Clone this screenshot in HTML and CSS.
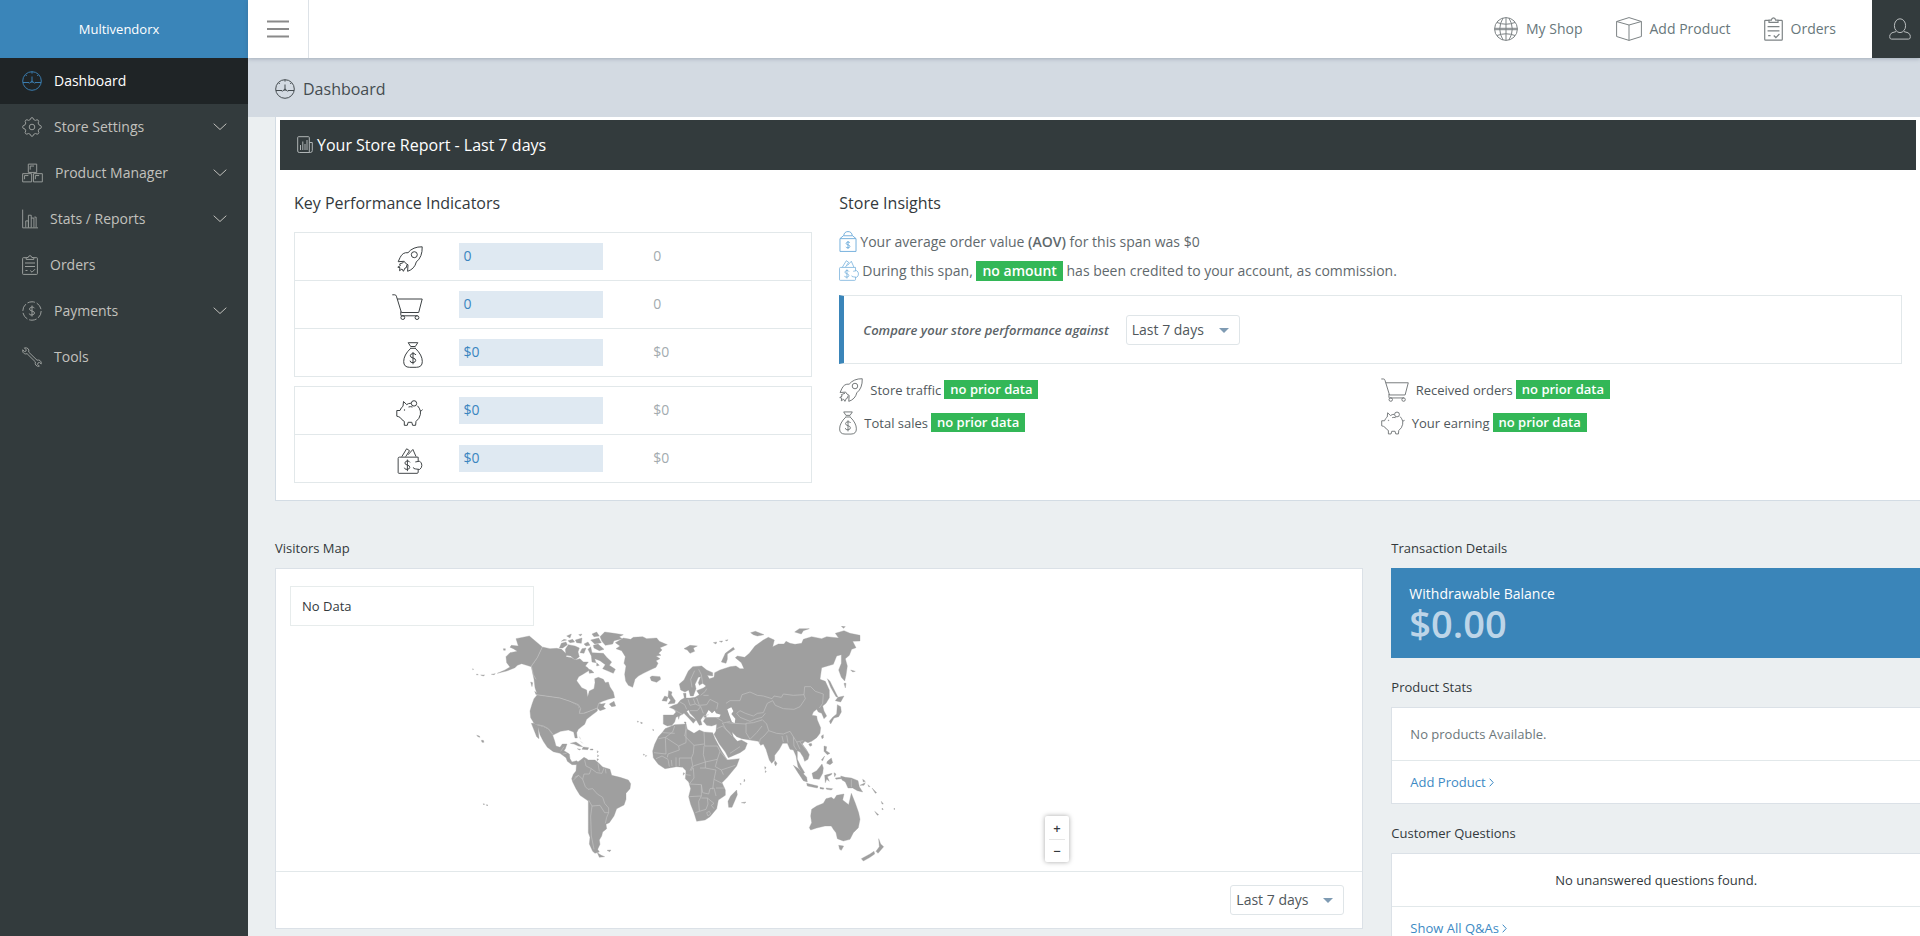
FILE: index.html
```html
<!DOCTYPE html>
<html lang="en">
<head>
<meta charset="utf-8">
<title>Multivendorx - Dashboard</title>
<meta name="viewport" content="width=device-width, initial-scale=1">
<link rel="stylesheet" href="styles.css">
</head>
<body>
<svg class="sprite" aria-hidden="true">
  <symbol id="i-dash" viewBox="0 0 20 20"><circle cx="10" cy="10" r="9.3"/><path d="M.8 11.5h6.4M12.8 11.5h6.4M10 5.5v4.2M8.6 11.6l1.4-2 1.4 2M7.2 12.6a3.2 3.2 0 0 1 5.6 0M10 .8v1.8M3.6 3.8l1.2 1.2M16.4 3.8l-1.2 1.2"/></symbol>
  <symbol id="i-gear" viewBox="0 0 20 20"><circle cx="10" cy="10" r="2.8"/><path d="M8.3 2.6Q8.6.6 10 .6t1.7 2l1.8.8q1.6-1.2 2.7-.2t-.1 2.800l.9 1.900q2.400.4 2.400 2.100t-2.400 2l-.8 1.900q1.300 1.700.2 2.800t-2.800-.2l-1.900.8q-.3 2-1.700 2t-1.700-2l-1.900-.8q-1.700 1.300-2.800.2t.2-2.800L3 12q-2.400-.3-2.400-2t2.400-2.100L3.800 6Q2.600 4.300 3.700 3.200t2.800.2z"/></symbol>
  <symbol id="i-boxes" viewBox="0 0 22 20"><path d="M6.600.7h8.800v8.700H6.600zM.7 10.700h9.400v8.600H.7zM12 10.700h9.300v8.600H12zM8.600 6.500V2.700h4M2.700 16.500v-3.800h4M14 16.500v-3.800h4"/></symbol>
  <symbol id="i-bars" viewBox="0 0 17 20"><path d="M.7 0v19.400H17M4 19v-7h2.800v7M6.800 19V6h3v13M9.800 9h2.900v10M13 8h2v11"/></symbol>
  <symbol id="i-clip" viewBox="0 0 16 20"><path d="M4 2.700H1.300q-.7 0-.7.700v15.200q0 .8.700.8h13.400q.7 0 .7-.8V3.400q0-.7-.7-.7H12M4.200 4.400V2.500h2q.3-1.800 1.800-1.800t1.800 1.800h2v1.900zM3 8h10M3 11.500h10M3.500 15.500h2M8.200 15.500l1.800 1.700 3-3"/></symbol>
  <symbol id="i-pay" viewBox="0 0 20 20"><circle cx="10" cy="10" r="9.200" stroke-dasharray="7.600 2"/><path d="M12.600 7.300Q12 6 10 6T7.500 8q0 1.500 2.500 2t2.500 2-2.500 2-2.700-1.500M10 4.500v11"/></symbol>
  <symbol id="i-wrench" viewBox="0 0 20 20"><path d="M.7 2.800q-.4 2.900 1.700 3.900 1.200.5 2.700 0l8.300 8.200q-.6 2 .5 3.300 1.700 1.700 3.500 1l-1.800-1.800.4-1.500 1.600-.4 1.600 1.500q.4-2.400-1.200-3.500-1.300-.8-3-.3L6.700 5.100q.7-2.400-.7-3.500T2.400.9l1.900 2-.4 1.300-1.400.4z"/></symbol>
  <symbol id="i-down" viewBox="0 0 14 8"><path d="M.7.700 7 6.500 13.300.7"/></symbol>
  <symbol id="i-next" viewBox="0 0 5 9"><path d="M.7.700 4.200 4.500.7 8.300"/></symbol>
  <symbol id="i-menu" viewBox="0 0 22 18"><path d="M0 1.500h22M0 9h22M0 16.500h22"/></symbol>
  <symbol id="i-globe" viewBox="0 0 24 24"><circle cx="12" cy="12" r="11.400"/><path d="M.6 11.300h22.800M.6 12.700h22.800M12 .6v22.800M3 5.500q9 3.400 18 0M3 18.500q9-3.400 18 0M9 1q-6.500 11 0 22M15 1q6.500 11 0 22"/></symbol>
  <symbol id="i-cube" viewBox="0 0 26 24"><path d="M.6 4.500 13 .6l12.400 3.900v15L13 23.400.6 19.500zL13 8l12.400-3.500M13 8v15.400"/></symbol>
  <symbol id="i-user" viewBox="0 0 22 22"><ellipse cx="11" cy="7.700" rx="5.600" ry="6.900"/><path d="M7 13.600q-5 .8-6 3-1 4.500 1.500 4.500h17q2.500 0 1.500-4.500-1-2.200-6-3"/></symbol>
  <symbol id="i-report" viewBox="0 0 16 18"><path d="M1.500.7h10q.8 0 .8.800v15h-10Q.7 16.500.7 15V1.500q0-.8.800-.8zM12.500 6.500h2.800v8q0 2-2 2h-1M3.500 14V9M5.800 14V5.500M8 14V8M10 14V4"/></symbol>
  <symbol id="i-rocket" viewBox="0 0 26 26"><path d="M25.200.8Q16 .6 11 6.700q-5.500-.7-8 5l-1.800 4 6-.4Q8.500 18 11 18.800L10.600 25.300q7-2.300 8.700-9.300Q25.500 11 25.200.8zM6.500 16.500 2.600 18l.8 1.600-2.600 1.600 2.200.5-.5 3L5 23l1.400 2.300L8 22l1.300-.3.600-2.700"/><circle cx="17.300" cy="8.700" r="3"/></symbol>
  <symbol id="i-cart" viewBox="0 0 31 26"><path d="M.3.800h2.400q1.300 0 1.700 1.400l5 16.300h17.300L30.200 5H5.300M8.800 17.500v4M9 21.800h16.500"/><circle cx="10.800" cy="23.600" r="1.900"/><circle cx="25" cy="23.600" r="1.900"/></symbol>
  <symbol id="i-bag" viewBox="0 0 20 26"><path d="M5.200.7h9.600L12.300 4.500H7.700zM7 6.300h6M7.500 6.500Q.7 13 .7 19.500q0 5.800 6 5.800h6.600q6 0 6-5.800 0-6.500-6.800-13M13 13Q12.500 11.600 10 11.600T7.300 13.700q0 1.700 2.700 2.300t2.700 2.400-2.700 2.200T7 18.700M10 10v12.300"/></symbol>
  <symbol id="i-pig" viewBox="0 0 27 26"><path d="M15 3.200q-2.800.1-4.300 1.400L7.500 1.500 7 6.300Q4.800 7.800 4 10.500H.8v5.700q2.200.4 3.500 1.400 1.500 2.500 4 3.800v3.900h3l.8-3h3.700l.8 3h3l.4-3.900q3.600-2.600 4.400-7V11q1.300 0 2.200-1.500M24.400 11q-.8-3-2.900-5.200M12.500 7q2-.7 4 0"/><circle cx="18" cy="3.400" r="2.700"/><circle cx="8.500" cy="10" r=".3"/></symbol>
  <symbol id="i-wallet" viewBox="0 0 26 27"><path d="M21.500 14V9.500H2q-1.300 0-1.300 1.300v14.700q0 .8.900.8h18.700q1.200 0 1.200-1.200V22M4.500 9 9.500.8l3 2L8.500 9M11 7l5-5.500L19.300 9M18.500 14.500l4.500-.8q2.300 1.500 2.300 4.300T23 22.300l-4.500-.6q-2 0-2-1.600M13 15q-.7-1.600-2.700-1.600T7.700 15.500q0 1.700 2.500 2.200t2.600 2.300-2.600 2.200-3-1.700M10.300 12v12"/></symbol>
  <symbol id="i-purse" viewBox="0 0 18 22"><path d="M.6 8h16.800v13.400H.6zM.6 8l3.600-3h9.600l3.600 3M4.500 5Q5 .6 9 .6T13.500 5M11 12.400Q10.500 11.500 9 11.500t-2 1.400q0 1.200 2 1.600t2 1.700-2 1.400-2.200-1M9 10.500v8.300"/></symbol>
</svg>

<div class="app">
  <aside class="sidebar">
    <a class="brand" href="#">Multivendorx</a>
    <nav class="side-nav" aria-label="Main">
      <a class="side-link active" href="#"><svg class="icon w20"><use href="#i-dash"/></svg><span>Dashboard</span></a>
      <a class="side-link" href="#"><svg class="icon w20"><use href="#i-gear"/></svg><span>Store Settings</span><svg class="chev"><use href="#i-down"/></svg></a>
      <a class="side-link" href="#"><svg class="icon w21"><use href="#i-boxes"/></svg><span>Product Manager</span><svg class="chev"><use href="#i-down"/></svg></a>
      <a class="side-link" href="#"><svg class="icon w16"><use href="#i-bars"/></svg><span>Stats / Reports</span><svg class="chev"><use href="#i-down"/></svg></a>
      <a class="side-link" href="#"><svg class="icon w16"><use href="#i-clip"/></svg><span>Orders</span></a>
      <a class="side-link" href="#"><svg class="icon w20"><use href="#i-pay"/></svg><span>Payments</span><svg class="chev"><use href="#i-down"/></svg></a>
      <a class="side-link" href="#"><svg class="icon w20"><use href="#i-wrench"/></svg><span>Tools</span></a>
    </nav>
  </aside>

  <div class="page">
    <header class="topbar">
      <button class="menu-btn" type="button" aria-label="Toggle menu"><svg><use href="#i-menu"/></svg></button>
      <nav class="top-nav" aria-label="Shortcuts">
        <a href="#"><svg class="globe"><use href="#i-globe"/></svg>My Shop</a>
        <a href="#"><svg class="cube"><use href="#i-cube"/></svg>Add Product</a>
        <a href="#"><svg class="clip"><use href="#i-clip"/></svg>Orders</a>
      </nav>
      <button class="user-btn" type="button" aria-label="Account"><svg><use href="#i-user"/></svg></button>
    </header>

    <div class="title-bar"><svg><use href="#i-dash"/></svg><h1>Dashboard</h1></div>

    <main class="content">
      <section class="report">
        <h2 class="report-head"><svg><use href="#i-report"/></svg>Your Store Report - Last 7 days</h2>
        <div class="report-body">
          <div class="kpi">
            <h3>Key Performance Indicators</h3>
            <table class="kpi-table">
              <tr><th scope="row" aria-label="Traffic"><svg class="k-rocket"><use href="#i-rocket"/></svg></th><td class="now"><span>0</span></td><td class="before">0</td></tr>
              <tr><th scope="row" aria-label="Orders"><svg class="k-cart"><use href="#i-cart"/></svg></th><td class="now"><span>0</span></td><td class="before">0</td></tr>
              <tr><th scope="row" aria-label="Sales"><svg class="k-bag"><use href="#i-bag"/></svg></th><td class="now"><span>$0</span></td><td class="before">$0</td></tr>
            </table>
            <table class="kpi-table">
              <tr><th scope="row" aria-label="Earning"><svg class="k-pig"><use href="#i-pig"/></svg></th><td class="now"><span>$0</span></td><td class="before">$0</td></tr>
              <tr><th scope="row" aria-label="Commission"><svg class="k-rocket"><use href="#i-wallet"/></svg></th><td class="now"><span>$0</span></td><td class="before">$0</td></tr>
            </table>
          </div>
          <div class="insights">
            <h3>Store Insights</h3>
            <p class="insight"><svg class="purse"><use href="#i-purse"/></svg><span>Your average order value <b>(AOV)</b> for this span was $0</span></p>
            <p class="insight"><svg class="wallet"><use href="#i-wallet"/></svg><span>During this span, <mark>no amount</mark> has been credited to your account, as commission.</span></p>
            <div class="compare">
              <label for="compare">Compare your store performance against</label>
              <span class="select"><select id="compare"><option>Last 7 days</option></select></span>
            </div>
            <div class="metrics">
              <div class="metric"><svg class="m-rocket"><use href="#i-rocket"/></svg>Store traffic <mark>no prior data</mark></div>
              <div class="metric"><svg class="m-cart"><use href="#i-cart"/></svg>Received orders <mark>no prior data</mark></div>
              <div class="metric"><svg class="m-bag"><use href="#i-bag"/></svg>Total sales <mark>no prior data</mark></div>
              <div class="metric"><svg class="m-rocket"><use href="#i-pig"/></svg>Your earning <mark>no prior data</mark></div>
            </div>
          </div>
        </div>
      </section>

      <div class="columns">
        <section>
          <h2 class="block-title">Visitors Map</h2>
          <div class="card">
            <div class="map-area">
              <div class="no-data">No Data</div>
              <div class="map-canvas">
                <svg class="map" viewBox="0 30 1380 720" role="img" aria-label="World map">
                  <g class="land">
                    <path d="M168 68 208 60 247 93 232 125 214 152 200 148 185 143 172 148 165 155 140 165 112 172 135 162 150 153 140 140 138 122 150 110 172 106 160 98 150 94 154 88 175 90z"/>
                    <path d="M247 93 270 98 290 97 305 100 320 115 318 122 335 125 345 132 360 128 370 138 385 138 376 150 384 156 388 163 370 174 356 182 350 194 365 215 380 222 383 243 388 225 402 218 405 200 404 188 415 184 430 190 436 200 445 198 450 213 460 228 464 245 445 250 428 256 415 262 425 264 436 262 430 272 437 278 420 284 412 276 390 285 370 293 360 290 355 270 330 256 300 246 232 236 225 215 222 190 214 152 232 125z"/>
                    <path d="M448 264 462 256 467 270 455 272z"/>
                    <path d="M232 236 300 246 330 256 355 270 360 290 375 292 390 285 412 277 412 285 395 298 380 310 374 325 355 340 350 350 352 366 345 366 341 348 325 342 302 346 285 354 278 358 265 340 250 332 232 328 222 322 212 305 210 285 216 265 222 248z"/>
                    <path d="M222 322 232 328 250 332 265 340 278 358 284 375 288 390 300 394 307 384 321 384 316 398 312 404 328 414 330 428 336 438 350 434 356 440 348 446 336 446 322 436 318 425 300 412 280 407 262 394 250 376 240 356 234 334 237 368 230 362 222 342 214 322z"/>
                    <path d="M331 382 348 378 368 392 355 390 342 384zM370 393 386 395 383 401 366 400zM391 399l8 0 0 3-8 0zM352 398l10 2-4 2zM358 362l4 8M362 376l6 6"/>
                    <path d="M350 440 362 432 372 424 380 428 385 432 405 432 415 440 428 453 450 460 455 478 480 484 505 492 512 503 510 518 498 532 498 550 492 567 470 578 462 600 448 620 438 625 440 638 428 648 425 660 418 672 420 685 413 700 418 708 405 712 398 706 388 684 390 664 385 650 385 555 360 538 348 518 338 498 335 488 340 475 348 465z"/>
                    <path d="M412 710 424 718 434 722 418 724zM441 703l12-1-4 5z"/>
                    <path d="M466 80 490 66 512 70 520 64 548 62 560 68 590 66 598 76 622 86 600 95 606 102 596 112 603 118 588 120 600 128 588 134 594 142 588 154 570 162 550 172 535 180 525 190 518 214 505 208 497 195 494 175 498 150 492 142 496 122 485 104 468 98 480 90z"/>
                    <path d="M570 184 576 180 600 182 602 190 590 199 574 194z"/>
                    <path d="M316 100 325 86 345 90 358 96 354 108 358 122 345 132 332 120 318 118zM298 96 304 82 318 78 322 86 308 96zM360 110 366 98 378 96 372 112zM384 100 392 92 396 110 430 112 440 124 455 138 448 148 466 160 460 172 446 166 428 158 436 146 420 134 404 128 408 140 396 138 394 120zM386 160 394 162 402 170 388 172zM410 140 418 148 410 150z"/>
                    <path d="M400 88 414 84 432 100 418 104 402 96zM420 62 434 48 462 52 490 56 478 62 486 68 462 74 458 84 436 88 426 76zM392 72 416 66 424 80 404 84zM346 72 366 66 364 82 350 80zM320 60 334 54 330 66zM356 56 366 54 362 60zM372 84 384 78 390 88 378 90zM396 54 410 48 418 60 402 62zM324 74 338 70 344 78 330 80zM304 76 312 70 320 72z"/>
                    <path d="M50 358l8 2 2 4-6-2zM64 373l6 0 2 6-6 0zM94 175l12-2-4 3zM50 174l5 2-5 1zM62 177l12 0-4 3zM38 158l3 2-3 1zM130 98l6 0 0 5-5 0zM212 198l6 2-2 12zM224 226l10 8-6 2zM70 563l4 1-3 3zM79 566l5 1-3 3zM532 315l4 2-3 2zM542 318l6 3-5 2zM550 414l4 2-3 2zM557 418l3 1-3 3zM578 340l4 2-3 2z"/>
                    <path d="M412 404l3 3-3 4zM413 416l3 3-3 4zM411 428l5 2-4 4z"/>
                  </g>
                  <g class="land" transform="translate(540 0)">
                    <path d="M70 297 100 297 108 288 102 280 88 274 100 268 112 264 122 252 133 246 130 232 138 232 138 246 150 246 165 244 178 236 170 224 190 216 198 210 188 202 178 208 175 200 182 182 175 184 165 205 168 218 160 240 151 240 146 222 135 228 122 222 118 204 132 192 145 165 158 152 185 150 200 162 218 170 218 180 202 178 208 188 222 184 224 170 240 162 270 152 288 150 300 158 312 158 304 140 286 125 292 120 314 124 328 112 345 90 370 72 385 64 403 72 398 92 415 84 432 84 438 76 450 82 465 85 485 82 490 70 515 62 545 68 560 62 596 66 586 52 612 44 630 52 660 58 660 75 638 76 648 95 635 100 628 118 616 128 622 150 618 178 614 195 604 184 596 162 604 142 604 116 590 120 580 145 545 155 540 190 556 196 568 222 568 245 558 262 548 270 552 285 560 300 552 308 545 292 535 288 530 280 520 288 516 298 530 300 532 312 542 335 540 352 530 365 515 376 504 380 495 376 487 384 500 402 508 416 504 430 494 436 490 424 480 408 472 404 472 430 482 450 494 470 488 474 474 452 468 420 460 402 450 400 442 382 428 382 418 400 404 418 404 432 395 442 388 432 378 400 370 384 362 388 355 376 330 372 306 368 290 362 276 348 280 362 292 376 304 372 322 382 315 400 300 410 265 425 256 408 238 384 222 355 228 345 230 325 215 330 200 328 190 316 196 306 190 300 182 312 186 326 178 328 170 314 162 304 150 292 146 282 140 286 150 300 168 312 160 322 148 308 132 292 122 298 108 304 104 318 96 328 82 330 70 324z"/>
                    <path d="M75 338 104 326 138 324 142 340 162 352 178 342 192 348 218 350 225 368 245 405 262 432 298 428 290 450 262 484 246 500 256 522 256 538 235 552 230 578 210 602 195 612 170 616 162 590 152 565 146 542 152 518 146 498 136 488 138 464 128 454 110 452 75 458 55 445 40 425 38 405 44 385 55 362 68 348z"/>
                    <path d="M264 556 272 540 290 522 292 536 276 574 266 574zM405 434l6 8-4 8-4-8zM86 224 96 228 94 236 106 254 104 262 84 264 92 252 84 244zM66 254 74 240 84 244 80 256z"/>
                    <path d="M244 138 256 112 280 94 284 100 262 114 262 130 258 142zM132 98 150 88 172 90 160 96 164 106 150 112 142 102zM220 80l10-2-2 6zM238 76l10-1-3 4zM256 73l8-2-3 4zM332 50 346 46 372 56 352 60 340 56zM464 48 478 38 508 38 490 44 484 54zM604 30l12 2-6 5zM632 162l14 4-8 2z"/>
                    <path d="M562 188 570 196 578 212 594 244 588 242 572 214zM612 202l6 0-2 14zM586 254 594 244 612 240 602 258zM592 266 602 272 604 288 596 302 582 306 572 324 568 316 578 304 590 294zM544 360l6-4 0 10-4 2zM506 384l8-2 2 6-6 3zM552 390 560 392 558 404 570 412 562 416 552 406zM562 436 574 426 578 440 570 446 560 442zM544 432l10-12-6 14z"/>
                    <path d="M460 448 476 458 500 484 502 498 490 494 474 470zM500 502 534 510 532 516 502 510zM540 514l12 2-2 4-10-2zM558 516l20 2-4 4-14-2zM516 472 530 464 546 444 550 456 548 472 538 490 520 488zM554 478 576 472 574 476 562 482 568 496 560 490 556 500zM582 470l6 4-4 8zM586 486l18-2 0 4-16 2zM602 480 616 484 634 486 654 494 658 512 668 528 652 524 638 516 624 516 616 498 606 492zM668 490l8 6-6 2zM660 508l16-8-4 8zM684 506l6 6-4 0zM696 516l14 14-4 2zM704 586l12 10-4 2zM724 556l6 8-4 0zM726 576l4 4-4 1zM762 576l3 3-3 2zM374 452l4 2-3 6zM376 464l3 2-3 4zM304 560l14-2-4 4zM312 490l3 2-3 6zM300 502l4 2-2 2zM130 470l4 2-4 6zM114 296l5 2-3 12zM132 318l6 0 0 8z"/>
                    <path d="M515 580 530 570 550 562 558 548 574 544 582 550 590 538 612 534 608 552 626 566 634 532 646 562 656 590 660 610 655 635 640 650 630 670 610 675 592 668 588 650 580 640 574 630 555 630 530 636 512 642 508 635 515 620 512 600z"/>
                    <path d="M596 688 611 690 604 703 599 700zM716 668 722 684 731 692 714 712 708 706 718 692zM702 706 704 714 690 724 670 735 664 728 690 714z"/>
                  </g>
                  <g class="sea" transform="translate(540 0)">
                    <path d="M198 296 206 282 216 292 224 284 228 292 242 296 238 304 216 304 200 304zM262 280 274 274 280 286 274 294 286 308 284 322 276 318 268 298z"/>
                  </g>
                  <g class="borders">
                    <path d="M247 93 232 125 214 150 220 176 228 190M228 236 300 246 330 256 355 266 362 278 358 292 370 292 390 285 412 276 416 262M232 326 250 330 265 338 280 356M302 406 312 392M320 412 308 414M374 432 378 450 394 458 388 474 372 474 368 490 356 478 344 484M394 458 410 470 426 472 432 456M414 442 418 466M436 458 438 472M356 478 340 492M368 490 376 512 384 520 398 518 412 534 428 544 434 562 446 576 446 590 434 590 420 568 396 570 386 552M396 570 392 600 394 660 402 700M446 590 440 604 436 622"/>
                  </g>
                  <g class="borders" transform="translate(540 0)">
                    <path d="M258 262 270 254 300 254 306 236 330 228 352 238 370 240 396 248 402 240 424 244 430 234 460 238 492 236 496 248 480 272 462 280 430 278 406 268 398 254 382 262 370 290 352 292 340 300 316 292 300 284 290 292 300 304 330 316 350 308 366 304 376 292M494 212 512 212 526 226 550 234 548 262 538 276M494 212 492 236"/>
                    <path d="M366 310 380 324 386 344 410 352 430 354 450 346 460 362 470 378 490 374M386 344 372 360 360 370 358 384M318 322 318 350 330 370M318 322 340 320 366 312M330 370 350 350 366 330M426 360 430 378M440 358 444 380M460 362 462 390 470 402M470 378 480 400M480 378 500 404M248 322 258 340 272 352M230 338 248 330 276 360M270 412 300 392M246 322 270 316M262 320 282 322 318 324"/>
                    <path d="M182 238 196 226 200 218M170 246 178 268 200 266 210 250 234 262 230 280M120 258 134 266 140 280M144 250 150 268 166 264 182 272 172 284 150 284M182 272 190 292M166 264 160 248M104 282 128 296M156 214 152 190 164 164M188 202 184 176 176 160M190 238 206 238M190 300 206 296M206 304 190 306M228 304 248 316"/>
                    <path d="M68 350 104 352M104 330 98 348 76 364 56 368M76 364 116 390 138 380 138 328M76 364 78 414 42 410M116 390 118 402 84 414 82 424M138 340 134 360 162 388 192 384M192 348 194 390 232 390M162 388 160 412 154 426 118 426 118 450M192 390 190 416 196 438 160 450 154 464M48 428 66 420 84 430 88 452M94 432 96 450M108 424 108 452M154 426 158 448 150 464M232 390 240 406 232 430 196 438M240 406 262 432M232 430 226 452 244 462 262 456 286 448M196 438 196 456 228 462 222 490 218 520M160 456 162 486 148 504 184 506 188 530 206 534 210 518 222 516 228 540M184 506 184 540 148 542M184 540 176 556 178 586 166 590M184 546 202 546 222 562 214 568 222 578M178 586 198 580 204 564 202 546M222 490 246 502M228 516 254 516M196 456 180 456M138 476 152 478M200 590l8-4 4 8-8 6zM250 476 244 462M634 490 634 514"/>
                  </g>
                </svg>
                <div class="zoom"><button type="button" aria-label="Zoom in">+</button><button type="button" aria-label="Zoom out">−</button></div>
              </div>
            </div>
            <div class="map-foot"><span class="select"><select aria-label="Map period"><option>Last 7 days</option></select></span></div>
          </div>
        </section>

        <div class="side-col">
          <section>
            <h2 class="block-title">Transaction Details</h2>
            <div class="balance"><div>Withdrawable Balance</div><strong>$0.00</strong></div>
          </section>
          <section>
            <h2 class="block-title">Product Stats</h2>
            <div class="card">
              <p class="row muted">No products Available.</p>
              <div class="row-foot"><a href="#">Add Product<svg><use href="#i-next"/></svg></a></div>
            </div>
          </section>
          <section>
            <h2 class="block-title">Customer Questions</h2>
            <div class="card">
              <p class="row center">No unanswered questions found.</p>
              <div class="row-foot"><a href="#">Show All Q&amp;As<svg><use href="#i-next"/></svg></a></div>
            </div>
          </section>
        </div>
      </div>
    </main>
  </div>
  <div class="fade"></div>
</div>
</body>
</html>
```
FILE: styles.css
```css
* { box-sizing: border-box; }

body {
  margin: 0;
  background: #ebeff1;
  color: #33393c;
  font: 13px/20px "Open Sans", "Noto Sans", sans-serif;
}

h1, h2, h3, p { margin: 0; font-weight: 400; }
a { color: inherit; text-decoration: none; }
button, select { font: inherit; color: inherit; }
svg { flex: none; fill: none; stroke: currentColor; }
.sprite { position: absolute; width: 0; height: 0; }

.app { display: flex; height: 100vh; overflow: hidden; }

/* Sidebar */
.sidebar { flex: 0 0 248px; background: #333b3d; color: #c2c1bd; }
.brand {
  display: flex; align-items: center; justify-content: center;
  height: 58px; padding-right: 10px;
  background: #3a85b9; color: #fff;
}
.side-link {
  display: flex; align-items: center; gap: 12px;
  height: 46px; padding: 0 21px 0 22px;
  font-size: 14px;
}
.side-link.active { background: #1f2426; color: #fff; }
.side-link .icon { height: 20px; color: #9a9e9c; }
.side-link.active .icon { color: #3a7cae; }
.w16 { width: 16px; }
.w20 { width: 20px; }
.w21 { width: 21px; }
.chev { width: 14px; height: 8px; margin-left: auto; }

/* Top bar */
.page { flex: 1; min-width: 0; display: flex; flex-direction: column; }
.topbar {
  display: flex; flex: none; height: 58px; background: #fff;
  box-shadow: 0 1px 4px rgba(60, 80, 100, .3);
  position: relative;
}
.menu-btn {
  width: 61px; padding: 0; border: 0; border-right: 1px solid #dde2e7;
  background: none; color: #8a8a8a;
}
.menu-btn svg { width: 22px; height: 18px; display: block; margin: 0 auto; stroke-width: 2; }
.top-nav {
  display: flex; align-items: center; gap: 33px;
  margin-left: auto; padding-right: 36px;
  color: #68777b; font-size: 14px;
}
.top-nav a { display: flex; align-items: center; gap: 8px; }
.top-nav svg { height: 24px; color: #7d8385; }
.top-nav .globe { width: 24px; }
.top-nav .cube { width: 26px; }
.top-nav .clip { width: 19px; }
.user-btn { width: 48px; padding: 0 0 0 17px; border: 0; background: #333b3d; color: #b9bdbe; overflow: hidden; }
.user-btn svg { display: block; width: 22px; height: 22px; }

.title-bar {
  display: flex; flex: none; align-items: center; gap: 8px;
  height: 59px; padding: 3px 27px 0;
  background: #d3dae2; color: #454c50;
}
.title-bar svg { width: 20px; height: 20px; }
.title-bar h1 { font-size: 16px; }

/* Store report */
.content { flex: 1; min-height: 0; overflow-y: auto; scrollbar-width: none; padding-left: 27px; }
.report {
  padding: 3px 4px 17px;
  background: #fff; border: solid #d3dce4; border-width: 0 0 1px 1px;
}
.report-head {
  display: flex; align-items: center; gap: 4px;
  height: 50px; padding: 0 17px;
  background: #333b3d; color: #fff; font-size: 16px;
}
.report-head svg { width: 16px; height: 18px; color: #b0b5b6; }
.report-body { display: grid; grid-template-columns: 1fr 2fr; padding-top: 22px; }
.kpi { padding: 0 13px 0 14px; }
.insights { padding: 0 14px; }
.report-body h3 { font-size: 16px; line-height: 22px; }

.kpi-table {
  width: 100%; margin-top: 18px;
  border: 1px solid #e2e8ea; border-collapse: collapse; table-layout: fixed;
}
.kpi-table + .kpi-table { margin-top: 9px; }
.kpi-table tr { height: 48px; border-bottom: 1px solid #e2e8ea; }
.kpi-table th { width: 164px; padding: 4px 36px 0 0; text-align: right; }
.kpi-table th svg { display: block; height: 26px; margin-left: auto; color: #3c4143; }
.kpi-table td { padding: 0; font-size: 14px; }
.kpi-table .now { width: 28%; color: #3a85c0; }
.now span { display: block; padding: 3px 5px 4px; background: #dfe9f2; }
.kpi-table .before { padding: 0 0 2px 50px; color: #a3abaf; }
.k-rocket { width: 26px; }
.k-cart { width: 31px; }
.k-bag { width: 20px; }
.k-pig { width: 27px; }

.insights h3 { margin-bottom: 13px; }
.insight { display: flex; align-items: center; height: 29px; gap: 3px; color: #5f696d; font-size: 14px; }
.insight svg { color: #72aedb; height: 21px; }
.insight b { font-weight: 600; }
.purse { width: 18px; }
.wallet { width: 20px; }
mark { display: inline-block; padding: 0 6px; background: #33b757; color: #fff; font-weight: 600; }
.compare {
  display: flex; align-items: center; gap: 17px;
  height: 69px; margin-top: 10px; padding-left: 19px;
  border: 1px solid #e2e8ea; border-left: 5px solid #3a85b9;
}
.compare label { font-style: italic; font-weight: 600; color: #5c6468; }
.select { position: relative; display: inline-block; }
.select::after {
  content: ""; position: absolute; right: 11px; top: 13px;
  border: 5px solid transparent; border-top-color: #7f9bb3; border-bottom: 0;
  pointer-events: none;
}
.select select {
  appearance: none; display: block; width: 114px; height: 30px; padding: 0 5px;
  background: #fff; border: 1px solid #dfe5e8; border-radius: 3px;
  color: #50575b; font-size: 14px;
}
.metrics {
  display: grid; grid-template-columns: 1fr 1fr; column-gap: 20px;
  margin-top: 9px; color: #50585c;
}
.metric { display: flex; align-items: center; gap: 7px; height: 33px; white-space: nowrap; }
.metric mark { margin-left: -4px; line-height: 19px; }
.metric svg { height: 24px; color: #6a6f71; }
.m-rocket { width: 24px; }
.m-cart { width: 28px; }
.m-bag { width: 18px; }

/* Lower blocks */
.columns { display: grid; grid-template-columns: 35fr 17fr; gap: 28px; padding-top: 37px; }
.side-col { display: flex; flex-direction: column; gap: 19px; }
.block-title { margin-bottom: 10px; font-size: 13px; }
.card { background: #fff; border: 1px solid #dbe1e7; }
.side-col .card { border-right: 0; }

.map-area { padding: 17px 14px 5px; }
.no-data { width: 244px; padding: 9px 11px; border: 1px solid #e7ecec; }
.map-canvas { position: relative; max-width: 800px; }
.map { display: block; width: 460px; margin: 0 auto; }
.land { fill: #9f9f9f; stroke: #9f9f9f; stroke-width: 1; stroke-linejoin: round; }
.sea { fill: #fff; stroke: none; }
.borders { stroke: #c2c2c2; stroke-width: 2; stroke-linejoin: round; }
.zoom {
  position: absolute; right: 21px; bottom: 4px;
  width: 24px; padding: 0 4px; background: #fff; border-radius: 2px;
  box-shadow: 0 0 5px rgba(0, 0, 0, .35);
}
.zoom button { display: block; width: 100%; height: 23px; padding: 0; border: 0; background: none; font-weight: 600; line-height: 22px; }
.zoom button + button { border-top: 1px solid #e6e6e6; }
.map-foot { display: flex; justify-content: flex-end; padding: 13px 18px; border-top: 1px solid #e2e8ea; }

.balance { padding: 16px 18px 16px; background: #3a85b9; color: #fff; font-size: 14px; }
.balance strong { display: block; color: #bdd5e8; font-size: 38px; font-weight: 600; line-height: 38px; }
.row { padding: 16px 18px; }
.muted { color: #6c777b; }
.center { text-align: center; }
.row-foot { padding: 11px 18px; border-top: 1px solid #e2e8ea; color: #3d8ac4; }
.row-foot a { display: inline-flex; align-items: center; gap: 3px; }
.row-foot svg { width: 5px; height: 9px; }

/* Soft shade along the lower window edge */
.fade {
  position: absolute; left: 22%; right: 22%; bottom: 0; height: 46px;
  background: radial-gradient(closest-side at 50% 100%, rgba(0, 0, 0, .12), rgba(0, 0, 0, .08) 60%, transparent);
  pointer-events: none;
}
```
